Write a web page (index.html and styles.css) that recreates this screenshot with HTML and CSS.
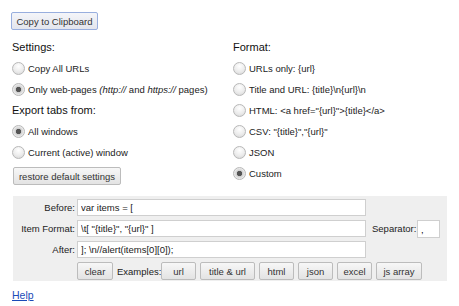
FILE: index.html
```html
<!DOCTYPE html>
<html>
<head>
<meta charset="utf-8">
<link rel="stylesheet" href="styles.css">
</head>
<body>
<div class="page">
  <button class="btn btn-primary">Copy to Clipboard</button>
  <div class="columns">
    <div class="col col-left">
      <div class="heading">Settings:</div>
      <label class="opt"><input type="radio" name="s"><span>Copy All URLs</span></label>
      <label class="opt"><input type="radio" name="s" checked><span>Only web-pages <i>(http://</i> and <i>https://</i> pages)</span></label>
      <div class="heading">Export tabs from:</div>
      <label class="opt"><input type="radio" name="w" checked><span>All windows</span></label>
      <label class="opt"><input type="radio" name="w"><span>Current (active) window</span></label>
      <button class="btn btn-restore">restore default settings</button>
    </div>
    <div class="col col-right">
      <div class="heading">Format:</div>
      <label class="opt"><input type="radio" name="f"><span>URLs only: {url}</span></label>
      <label class="opt"><input type="radio" name="f"><span>Title and URL: {title}\n{url}\n</span></label>
      <label class="opt"><input type="radio" name="f"><span>HTML: &lt;a href="{url}"&gt;{title}&lt;/a&gt;</span></label>
      <label class="opt"><input type="radio" name="f"><span>CSV: "{title}","{url}"</span></label>
      <label class="opt"><input type="radio" name="f"><span>JSON</span></label>
      <label class="opt"><input type="radio" name="f" checked><span>Custom</span></label>
    </div>
  </div>
  <div class="panel">
    <label class="lbl r1">Before:</label>
    <input class="txt r1" type="text" value="var items = [">
    <label class="lbl r2">Item Format:</label>
    <input class="txt r2" type="text" value='\t[ "{title}", "{url}" ]'>
    <label class="sep-lbl">Separator:</label>
    <input class="sep" type="text" value=",">
    <label class="lbl r3">After:</label>
    <input class="txt r3" type="text" value="]; \n//alert(items[0][0]);">
    <div class="actions">
      <button class="btn btn-sm w36">clear</button>
      <span class="ex">Examples:</span>
      <button class="btn btn-sm w35">url</button>
      <button class="btn btn-sm w55">title &amp; url</button>
      <button class="btn btn-sm w35">html</button>
      <button class="btn btn-sm w35">json</button>
      <button class="btn btn-sm w35">excel</button>
      <button class="btn btn-sm w46">js array</button>
    </div>
  </div>
  <a class="help" href="#">Help</a>
</div>
</body>
</html>
```
FILE: styles.css
```css
html, body {
  margin: 0;
  padding: 0;
  background: #ffffff;
}
body {
  font-family: "Liberation Sans", Arial, sans-serif;
  font-size: 9.5px;
  color: #222;
}
.page {
  padding: 12px 12px 0 12px;
}
.btn {
  font-family: inherit;
  font-size: 9.5px;
  color: #333;
  background: linear-gradient(#f7f7f7, #e3e3e3);
  border: 1px solid #bcbcbc;
  border-radius: 2px;
  padding: 0;
  height: 18px;
  margin: 0;
  box-sizing: border-box;
  white-space: nowrap;
}
.btn-primary {
  border-color: #98aede;
  width: 87px;
  margin-left: -1px;
  display: block;
  background: linear-gradient(#f4f5f9, #e3e5ed);
}
.columns {
  display: grid;
  grid-template-columns: 221px 1fr;
  margin-top: 7px;
}
.col {
  display: flex;
  flex-direction: column;
}
.heading {
  font-size: 11px;
  color: #111;
  height: 21px;
  line-height: 21px;
}
.opt {
  display: flex;
  align-items: center;
  height: 21px;
  white-space: nowrap;
}
.opt input {
  appearance: none;
  -webkit-appearance: none;
  width: 13px;
  height: 13px;
  margin: 0 3px 0 0;
  border-radius: 50%;
  border: 1px solid #b8b8b8;
  background: radial-gradient(circle at 50% 30%, #ffffff 0%, #ececec 55%, #d4d4d4 100%);
  box-sizing: border-box;
  flex: none;
}
.opt input:checked {
  background: radial-gradient(circle, #555 0, #555 2.3px, #cfcfcf 3px, #eeeeee 70%, #dcdcdc 100%);
}
.btn-restore {
  align-self: flex-start;
  margin-top: 4px;
  margin-left: 1px;
  width: 108px;
}
.panel {
  margin: 11px 0 0 1px;
  width: 434px;
  background: #efefef;
  display: grid;
  grid-template-columns: 64px 289px 51px 23px;
  grid-template-rows: 17px 17px 17px 18px;
  row-gap: 4px;
  padding: 3px 0 2px 0;
  box-sizing: border-box;
  height: 85px;
}
.lbl {
  grid-column: 1;
  text-align: right;
  padding-right: 2px;
  line-height: 17px;
  color: #222;
}
.r1 { grid-row: 1; }
.r2 { grid-row: 2; }
.r3 { grid-row: 3; }
.txt {
  grid-column: 2;
  font-family: inherit;
  font-size: 9.5px;
  color: #222;
  border: 1px solid #cfcfcf;
  background: #fff;
  padding: 0 3px;
  margin: 0;
  height: 17px;
  box-sizing: border-box;
  outline: none;
}
.sep-lbl {
  grid-column: 3;
  grid-row: 2;
  line-height: 17px;
  padding-left: 6px;
  white-space: nowrap;
}
.sep {
  grid-column: 4;
  grid-row: 2;
  width: 23px;
  height: 18px;
  margin: 0;
  font-family: inherit;
  font-size: 9.5px;
  border: 1px solid #cfcfcf;
  padding: 0 3px;
  box-sizing: border-box;
  outline: none;
}
.actions {
  grid-column: 2 / 5;
  grid-row: 4;
  display: flex;
  align-items: center;
  gap: 4px;
}
.btn-sm { height: 18px; }
.w35 { width: 35px; }
.w36 { width: 36px; }
.w46 { width: 46px; }
.w55 { width: 55px; }
.ex {
  width: 40px;
  white-space: nowrap;
}
.help {
  display: inline-block;
  margin-top: 8px;
  color: #1a4bb8;
  font-size: 10.5px;
}
```
